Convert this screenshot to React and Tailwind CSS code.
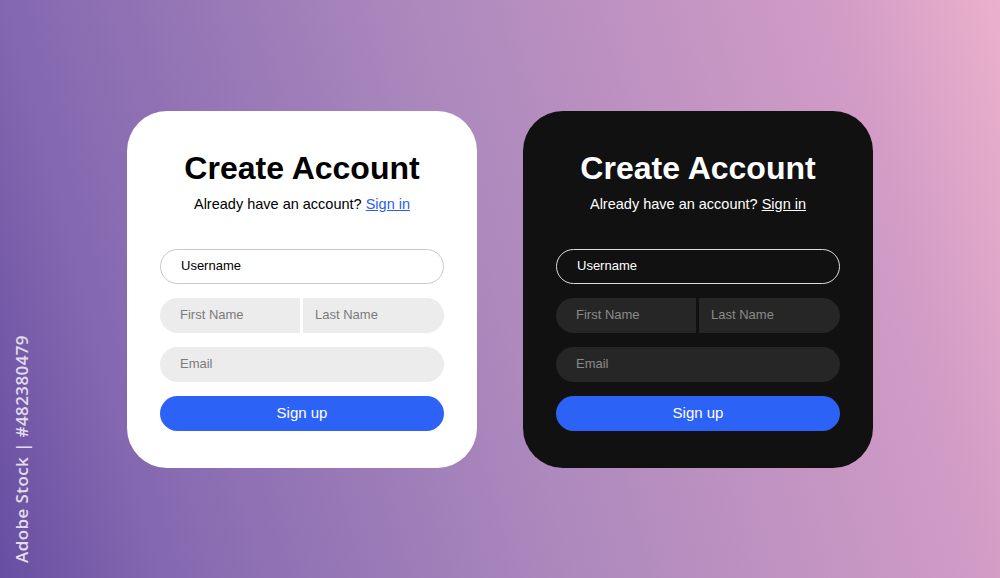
import React from 'react';

const SignupCard = ({ dark }) => {
  const card = dark ? 'bg-[#111111] text-white' : 'bg-white text-black';
  const link = dark ? 'text-white' : 'text-[#2b5cf6]';
  const userBox = dark ? 'border-[#dcdcdc] text-white' : 'border-[#c9c9c9] text-black';
  const field = dark ? 'bg-[#262626] text-[#8a8a8a]' : 'bg-[#ececec] text-[#7b7b7b]';

  return (
    <div className={`w-[350px] h-[357px] shrink-0 rounded-[40px] px-[33px] pt-[38px] ${card}`}>
      <h1 className="text-center text-[32px] leading-[38px] font-bold">Create Account</h1>
      <p className="mt-[7px] text-center text-[14.5px] leading-[20px]">
        Already have an account? <a href="#" className={`underline ${link}`}>Sign in</a>
      </p>

      <div className="mt-[35px] flex flex-col gap-[14px]">
        <div className={`h-[35px] rounded-full border-[1.5px] flex items-center pl-[20px] text-[13px] ${userBox}`}>
          Username
        </div>
        <div className="flex">
          <div className={`w-[140px] h-[35px] rounded-l-full flex items-center pl-[20px] text-[13px] ${field}`}>First Name</div>
          <div className={`ml-[3px] flex-1 h-[35px] rounded-r-full flex items-center pl-[12px] text-[13px] ${field}`}>Last Name</div>
        </div>
        <div className={`h-[35px] rounded-full flex items-center pl-[20px] text-[13px] ${field}`}>Email</div>
        <button className="h-[35px] rounded-full bg-[#2d62f6] text-white text-[15px] font-medium">Sign up</button>
      </div>
    </div>
  );
};

export default function App() {
  return (
    <div
      className="relative w-[1000px] h-[578px] overflow-hidden flex items-center justify-center gap-[46px] bg-[linear-gradient(75deg,#684ea2_0%,#8468b0_14%,#ad89bd_50%,#d29cc6_86%,#ebb0cb_100%)]"
      style={{ fontFamily: '"Liberation Sans", Arial, sans-serif' }}
    >
      <SignupCard />
      <SignupCard dark />

      <div
        className="absolute left-[11px] bottom-[15px] [writing-mode:vertical-rl] rotate-180 text-[17px] leading-[22px] font-semibold text-[#e2dcec] tracking-[0.4px]"
        style={{ fontFamily: '"Open Sans", "Noto Sans", sans-serif' }}
      >
        Adobe Stock | #482380479
      </div>
    </div>
  );
}
